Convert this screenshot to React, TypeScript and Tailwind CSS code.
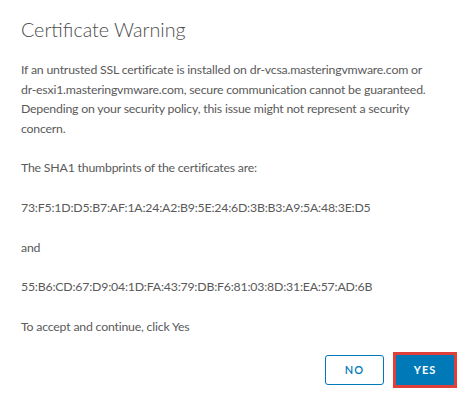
import React from "react";

export default function App() {
  const font = { fontFamily: "Lato, 'Open Sans', sans-serif" };
  return (
    <div className="w-[474px] h-[401px] bg-white overflow-hidden" style={font}>
      <div className="pl-[21px] pr-[10px] pt-[17px]">
        <h1 className="text-[19.7px] leading-[26px] font-light text-[#4d4d4d] whitespace-nowrap">
          Certificate Warning
        </h1>
        <div className="mt-[17px] flex flex-col gap-[20px] text-[12.3px] leading-[19.6px] text-[#5a5a5a] whitespace-nowrap tracking-[-0.2px]">
          <p>
            If an untrusted SSL certificate is installed on dr-vcsa.masteringvmware.com or
            <br />
            dr-esxi1.masteringvmware.com, secure communication cannot be guaranteed.
            <br />
            Depending on your security policy, this issue might not represent a security
            <br />
            concern.
          </p>
          <p>The SHA1 thumbprints of the certificates are:</p>
          <p>73:F5:1D:D5:B7:AF:1A:24:A2:B9:5E:24:6D:3B:B3:A9:5A:48:3E:D5</p>
          <p>and</p>
          <p>55:B6:CD:67:D9:04:1D:FA:43:79:DB:F6:81:03:8D:31:EA:57:AD:6B</p>
          <p>To accept and continue, click Yes</p>
        </div>
        <div className="mt-[19px] flex justify-end gap-[12px] pr-[10px]">
          <button className="w-[59px] h-[30px] border border-[#0079b8] rounded-[3px] bg-white text-[#0079b8] text-[11px] font-semibold tracking-[1px]">
            NO
          </button>
          <button className="w-[58px] h-[30px] bg-[#0079b8] text-white text-[11px] font-bold tracking-[1px] outline-[3px] outline-solid outline-[#e0403a]">
            YES
          </button>
        </div>
      </div>
    </div>
  );
}
